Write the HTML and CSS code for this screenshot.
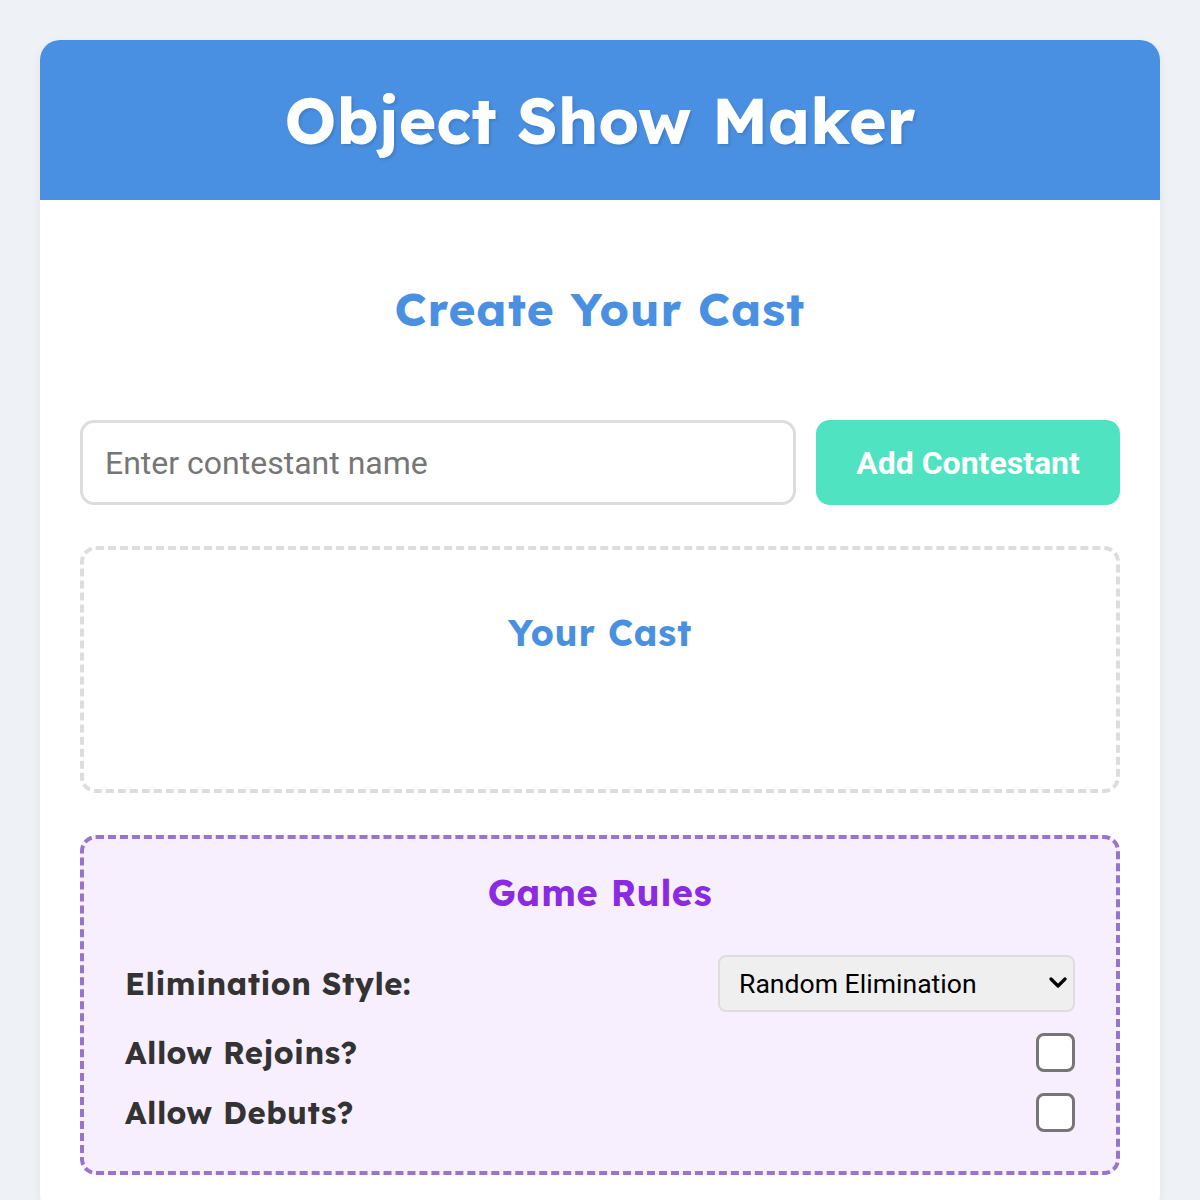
FILE: index.html
```html
<!DOCTYPE html>
<html lang="en">
  <head>
    <meta charset="UTF-8" />
    <meta name="viewport" content="width=device-width, initial-scale=1.0" />
    <title>Object Show Maker</title>
    <link rel="stylesheet" href="styles.css">
  </head>
  <body>
    <div class="container">
      <header class="app-header">
        <h1>Object Show Maker</h1>
      </header>

      <main class="content">
        <h2>Create Your Cast</h2>

        <div class="add-row">
          <input type="text" id="contestantName" placeholder="Enter contestant name" />
          <button id="addBtn">Add Contestant</button>
        </div>

        <div class="cast-box">
          <h3>Your Cast</h3>
          <div id="castList"></div>
        </div>

        <div class="rules-box">
          <h3>Game Rules</h3>

          <div class="rule-row">
            <label for="elimStyle">Elimination Style:</label>
            <div class="select-wrap">
              <select id="elimStyle">
                <option>Random Elimination</option>
                <option>Voting</option>
              </select>
              <svg class="chevron" width="18" height="12" viewBox="0 0 18 12">
                <path d="M2 2 L9 9 L16 2" fill="none" stroke="#000" stroke-width="3.2" stroke-linecap="round" stroke-linejoin="round" />
              </svg>
            </div>
          </div>

          <div class="rule-row">
            <label for="rejoins">Allow Rejoins?</label>
            <input type="checkbox" id="rejoins" />
          </div>

          <div class="rule-row">
            <label for="debuts">Allow Debuts?</label>
            <input type="checkbox" id="debuts" />
          </div>
        </div>
      </main>
    </div>
  </body>
</html>
```

FILE: styles.css
```css
body {
  font-family: "Roboto", sans-serif;
  background-color: #eef2f6;
  color: #333;
  margin: 0;
  padding: 40px;
}
.container {
  max-width: 1120px;
  margin: 0 auto;
  background-color: #fff;
  border-radius: 20px;
  box-shadow: 0 4px 12px rgba(0, 0, 0, 0.06);
  overflow: hidden;
}
h1,
h2,
h3,
.rule-row label {
  font-family: "Lexend", "Noto Sans", sans-serif;
}
.app-header {
  background-color: #4a90e2;
  height: 160px;
  display: flex;
  align-items: center;
  justify-content: center;
}
.app-header h1 {
  margin: 0;
  color: #fff;
  font-size: 64px;
  letter-spacing: 0;
  text-shadow: 2px 2px 3px rgba(0, 0, 0, 0.12);
}
.content {
  padding: 80px 40px 40px;
}
h2 {
  margin: 0 0 82px;
  text-align: center;
  color: #4a90e2;
  font-size: 46px;
  line-height: 58px;
  letter-spacing: 1px;
}
.add-row {
  display: flex;
  gap: 20px;
  margin-bottom: 41px;
}
.add-row input {
  flex: 1;
  height: 85px;
  box-sizing: border-box;
  padding: 0 22px;
  font-family: "Roboto", sans-serif;
  font-size: 32px;
  border: 3px solid #ddd;
  border-radius: 14px;
  outline: none;
}
.add-row input::placeholder {
  color: #767676;
}
.add-row button {
  width: 304px;
  height: 85px;
  border: none;
  border-radius: 14px;
  background-color: #50e3c2;
  color: #fff;
  font-family: "Roboto", sans-serif;
  font-weight: bold;
  font-size: 32px;
  cursor: pointer;
}
.cast-box {
  border: 4px dashed #ddd;
  border-radius: 16px;
  min-height: 247px;
  box-sizing: border-box;
  padding: 61px 20px 20px;
  margin-bottom: 42px;
}
h3 {
  margin: 0;
  text-align: center;
  font-size: 36px;
  line-height: 43px;
  letter-spacing: 0.8px;
}
.cast-box h3 {
  color: #4a90e2;
}
.rules-box {
  background-color: #f7effe;
  border: 4px dashed #9575cd;
  border-radius: 16px;
  padding: 32px 41px 39px;
}
.rules-box h3 {
  color: #8a2be2;
  margin-bottom: 41px;
}
.rule-row {
  display: flex;
  align-items: center;
  justify-content: space-between;
  margin-bottom: 21px;
}
.rule-row:last-child {
  margin-bottom: 0;
}
.rule-row label {
  font-weight: bold;
  font-size: 31px;
  line-height: 38px;
  color: #333;
  letter-spacing: 0.5px;
}
.select-wrap {
  position: relative;
}
.select-wrap select {
  appearance: none;
  width: 357px;
  height: 57px;
  padding: 0 50px 0 19px;
  background-color: #efefef;
  border: 2px solid #ddd;
  border-radius: 8px;
  font-family: "Roboto", sans-serif;
  font-size: 26.6px;
  color: #000;
}
.chevron {
  position: absolute;
  right: 8px;
  top: 22px;
  pointer-events: none;
}
.rule-row input[type="checkbox"] {
  appearance: none;
  width: 39px;
  height: 39px;
  margin: 0;
  background-color: #fff;
  border: 3px solid #767676;
  border-radius: 8px;
}
```
